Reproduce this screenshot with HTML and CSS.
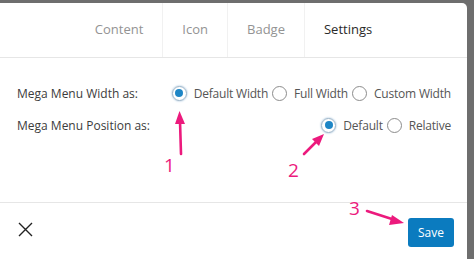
FILE: index.html
```html
<!DOCTYPE html>
<html>
<head>
<meta charset="utf-8">
<link rel="stylesheet" href="styles.css">
</head>
<body>
<div class="dialog">
  <div class="tabs">
    <div class="tab">Content</div>
    <div class="tab">Icon</div>
    <div class="tab">Badge</div>
    <div class="tab active">Settings</div>
  </div>
  <div class="content">
    <div class="row">
      <div class="label">Mega Menu Width as:</div>
      <div class="options">
        <span class="radio checked"></span><span class="opt">Default Width</span>
        <span class="radio"></span><span class="opt">Full Width</span>
        <span class="radio"></span><span class="opt">Custom Width</span>
      </div>
    </div>
    <div class="row">
      <div class="label">Mega Menu Position as:</div>
      <div class="options">
        <span class="radio checked"></span><span class="opt">Default</span>
        <span class="radio"></span><span class="opt">Relative</span>
      </div>
    </div>
  </div>
  <div class="footer">
    <svg class="close" width="15" height="15" viewBox="0 0 15 15"><path d="M1 1L14 14M14 1L1 14" stroke="#222" stroke-width="1.4" fill="none"/></svg>
    <button class="save">Save</button>
  </div>
  <svg class="annot" width="474" height="259" viewBox="0 0 474 259">
    <g stroke="#ec1a7d" stroke-width="2.6" fill="none" stroke-linecap="round">
      <line x1="181" y1="154" x2="180" y2="121"/>
      <line x1="304" y1="154" x2="317" y2="141"/>
      <line x1="367" y1="211" x2="395" y2="220"/>
    </g>
    <g fill="#ec1a7d">
      <polygon points="179.5,111 175,124 185,124"/>
      <polygon points="324,134 312,139 319,146"/>
      <polygon points="404,223 392,215 389,225"/>
    </g>
    <g class="num" fill="#ec1a7d">
      <text x="164" y="172">1</text>
      <text x="288" y="177">2</text>
      <text x="349" y="215">3</text>
    </g>
  </svg>
</div>
</body>
</html>
```
FILE: styles.css
```css
html, body {
  margin: 0;
  padding: 0;
}
body {
  background: #6e6e6e;
  width: 474px;
  height: 259px;
  overflow: hidden;
  font-family: "Open Sans", "Liberation Sans", sans-serif;
}
.dialog {
  position: relative;
  margin-top: 3px;
  width: 467px;
  height: 256px;
  background: #fff;
  border-top-right-radius: 5px;
  display: flex;
  flex-direction: column;
}
.tabs {
  height: 55px;
  border-bottom: 1px solid #e6e6e6;
  display: flex;
  justify-content: center;
  box-sizing: border-box;
}
.tab {
  padding: 0 19px 0 19px;
  display: flex;
  align-items: center;
  font-size: 13px;
  color: #939393;
  border-left: 1px solid #f1f1f1;
  padding-bottom: 2px;
}
.tab:first-child {
  border-left: none;
}
.tab.active {
  color: #2a2a2a;
}
.content {
  flex: 1;
  padding: 19px 16px 0 17px;
  border-bottom: 1px solid #e6e6e6;
}
.row {
  display: flex;
  justify-content: space-between;
  align-items: center;
  height: 32px;
}
.label {
  font-size: 12px;
  color: #3c3c3c;
  font-weight: 500;
}
.options {
  display: flex;
  align-items: center;
  font-size: 12px;
  color: #555;
  letter-spacing: -0.2px;
}
.radio {
  width: 15px;
  height: 15px;
  border: 1px solid #8c8c8c;
  border-radius: 50%;
  box-sizing: border-box;
  display: inline-flex;
  align-items: center;
  justify-content: center;
  margin-right: 7px;
  margin-left: 4px;
}
.radio:first-child {
  margin-left: 0;
}
.radio.checked {
  border-color: #9bb3c6;
  box-shadow: 0 0 2px #7fa8cc;
}
.radio.checked::after {
  content: "";
  width: 8px;
  height: 8px;
  border-radius: 50%;
  background: #1e86c6;
}
.footer {
  height: 56px;
  display: flex;
  align-items: center;
  justify-content: space-between;
  padding: 0 13px 0 18px;
}
.close {
  display: block;
  margin-top: -4px;
}
.save {
  background: #0b7bbf;
  color: #fff;
  border: none;
  border-radius: 3px;
  width: 46px;
  height: 29px;
  margin-top: 2px;
  font-family: "Open Sans", "Liberation Sans", sans-serif;
  font-size: 12px;
  padding: 0;
}
.annot {
  position: absolute;
  left: 0;
  top: -3px;
  pointer-events: none;
}
.num text {
  font-family: "Open Sans", "Liberation Sans", sans-serif;
  font-size: 19px;
}
```
